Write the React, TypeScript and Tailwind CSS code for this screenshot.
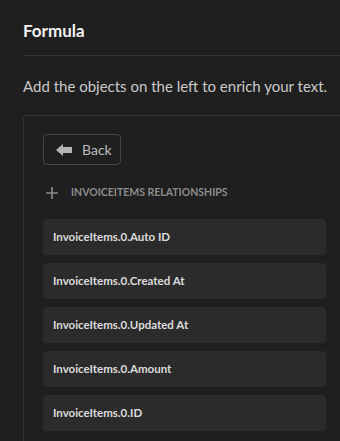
const fields = ['Auto ID', 'Created At', 'Updated At', 'Amount', 'ID']

function BackArrow() {
  return (
    <svg width="17" height="12" viewBox="0 0 17 12" className="shrink-0">
      <path d="M0 6 L7 0 L7 3 L16 3 L16 9 L7 9 L7 12 Z" fill="#b5b5b5" />
    </svg>
  )
}

function PlusIcon() {
  return (
    <svg width="12" height="12" viewBox="0 0 12 12" className="shrink-0">
      <path d="M6 0 V12 M0 6 H12" stroke="#8a8a8a" strokeWidth="1.6" />
    </svg>
  )
}

export default function App() {
  return (
    <div
      className="h-[441px] w-[340px] overflow-hidden bg-[#1f1f1f] pl-[23px]"
      style={{ fontFamily: 'Lato, "Open Sans", sans-serif' }}
    >
      <div className="flex h-[56px] items-center border-b border-[#333333] pt-[6px]">
        <h1 className="text-[17px] font-bold text-[#f2f2f2]">Formula</h1>
      </div>

      <p className="mt-[20px] text-[15px] leading-[20px] text-[#c9c9c9]">
        Add the objects on the left to enrich your text.
      </p>

      <div className="mt-[19px] h-[400px] rounded-tl-[4px] border-l border-t border-[#333333] pl-[19px] pt-[18px]">
        <button className="flex h-[31px] w-[78px] items-center gap-[9px] rounded-[4px] border border-[#474747] pl-[12px] text-[14px] text-[#bdbdbd]">
          <BackArrow />
          <span>Back</span>
        </button>

        <div className="mt-[20px] flex items-center gap-[13px] pl-[3px]">
          <PlusIcon />
          <span className="text-[10.5px] font-bold text-[#8c8c8c]">
            INVOICEITEMS RELATIONSHIPS
          </span>
        </div>

        <div className="mt-[18px] flex w-[283px] flex-col gap-[8px]">
          {fields.map(f => (
            <div
              key={f}
              className="flex h-[36px] items-center rounded-[4px] bg-[#2b2b2b] pl-[10px] text-[11.5px] font-bold text-[#dcdcdc]"
            >
              InvoiceItems.0.{f}
            </div>
          ))}
        </div>
      </div>
    </div>
  )
}
